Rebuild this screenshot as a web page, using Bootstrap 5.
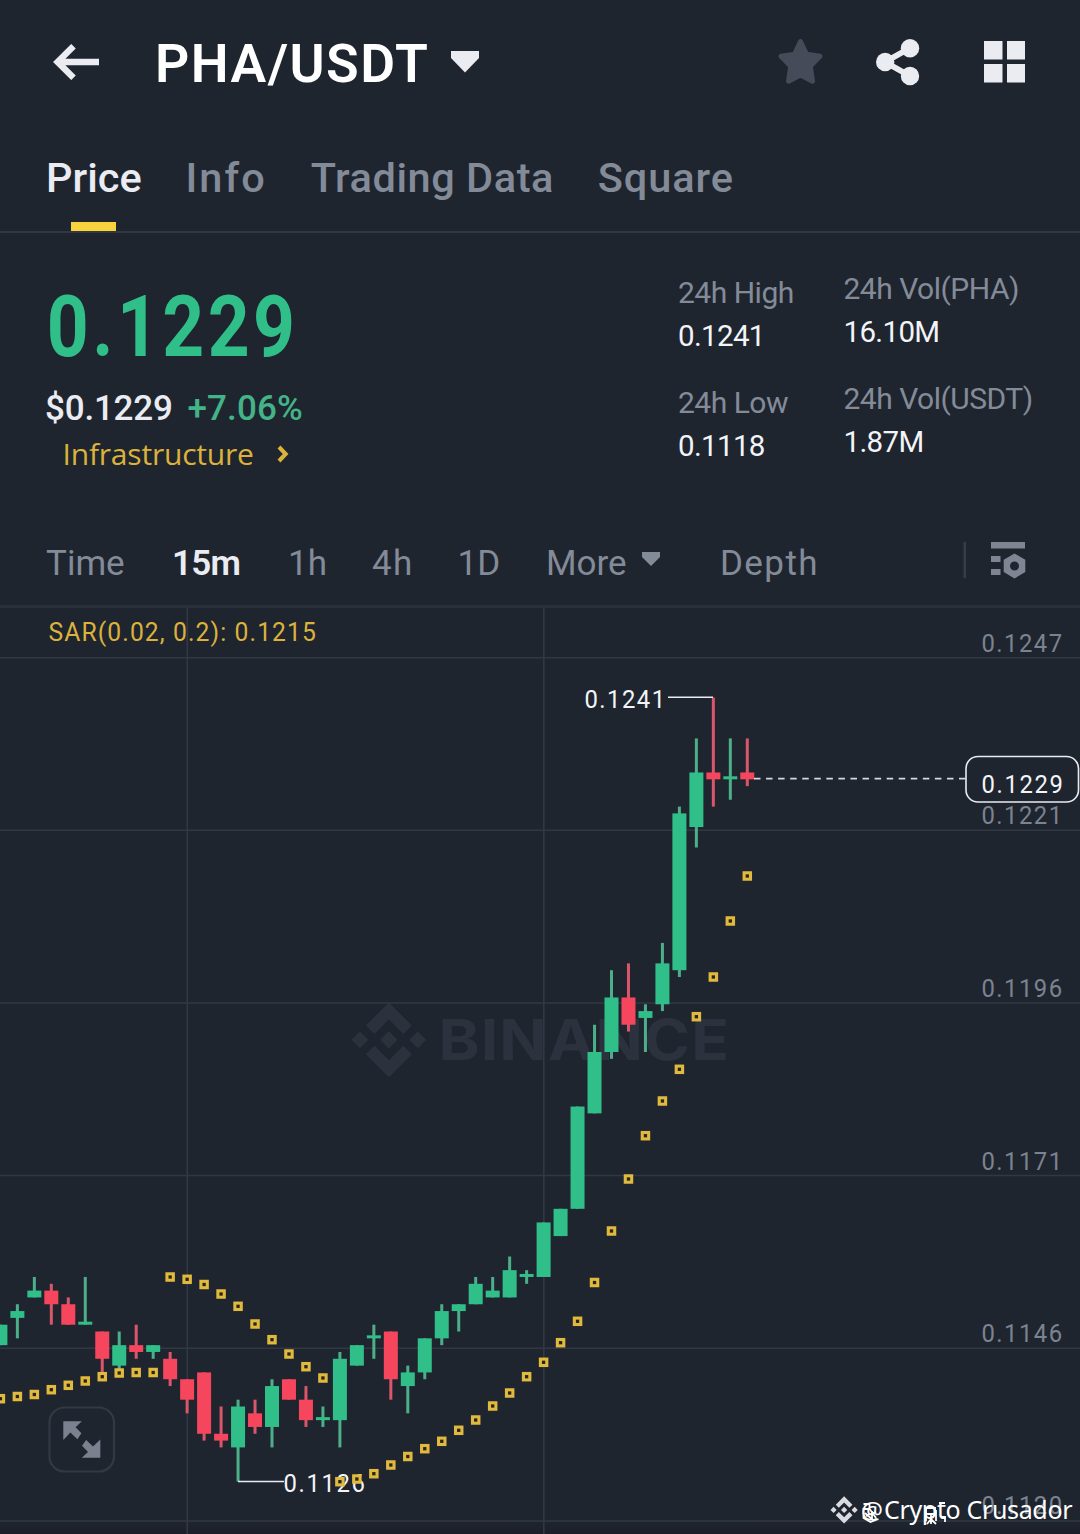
<!DOCTYPE html>
<html lang="en" data-bs-theme="dark">
<head>
<meta charset="utf-8">
<meta name="viewport" content="width=device-width, initial-scale=1">
<title>PHA/USDT</title>
<link href="https://cdn.jsdelivr.net/npm/bootstrap@5.3.0/dist/css/bootstrap.min.css" rel="stylesheet">
<style>
:root{--bg:#1f252f;--line:#323843;--mut:#848b98;--txt:#eaecf2;--up:#30bf89;--upw:#4caf8a;--down:#f6465d;--downw:#d9566b;--gold:#dcb23c}
body{width:1080px;height:1534px;overflow:hidden;background:var(--bg);color:var(--txt);font-family:Roboto,"Noto Sans",sans-serif}
svg{display:block}
.topbar{height:124px;padding-left:53px;padding-right:54px}
.pair{font-size:53.5px;font-weight:600;letter-spacing:1.45px;line-height:60px;color:#fff;margin-left:56px;padding-top:4px}
.pair-caret{margin-left:22px}
.act-share{margin-left:52px}.act-grid{margin-left:63px}
.tabs{height:109px;padding-left:46px;gap:43.8px;border-bottom:2px solid var(--line);font-size:41.5px;font-weight:500;line-height:107px}
.tabs a,.frames a{color:var(--mut);text-decoration:none}
.tabs a.active,.frames a.active{color:var(--txt)}
.tabs a.active::after{content:"";position:absolute;left:25px;bottom:0;width:45px;height:9px;background:#f8d33e}
.t1{letter-spacing:0}.t2{letter-spacing:2.1px}.t3{letter-spacing:.55px}.t4{letter-spacing:.9px}
.ticker{height:287px}
.lastcol{width:678px;padding:44px 0 0 46px}
.last{font-size:85px;font-weight:700;line-height:100px;letter-spacing:4px;color:var(--up);transform:scaleX(.86);transform-origin:0 0;padding-left:1px}
.sub{font-size:35px;font-weight:500;line-height:44px;margin-top:10px;letter-spacing:-.2px;margin-left:-1px}
.chg{color:#42b487;letter-spacing:.13px;margin-left:14.8px}
.sector{font-family:"Open Sans",sans-serif;font-size:30px;line-height:42px;color:var(--gold);letter-spacing:-.2px;margin:2px 0 0 16.5px}
.sector svg{margin-left:23px}
.stat{gap:23px}
.stat-a{width:165.5px;padding-top:38px}.stat-b{padding-top:34px}
.lbl{font-size:30px;line-height:44px;color:var(--mut);letter-spacing:-.5px}
.val{font-size:29.5px;line-height:43px;color:#f2f4f8;letter-spacing:-.65px}
.stat-b .val{line-height:42px;margin-bottom:1px}
.frames{height:88px;border-bottom:3px solid #2a303b;padding-left:46px;grid-template-columns:126px 116px 84px 85.5px 88.5px 174px 242px auto;font-size:35px;line-height:87px}
.frames a.active{font-weight:600;letter-spacing:-.8px}
.frames .wide{letter-spacing:1.4px}
.more-caret{margin:32px 0 0 15.5px}
.frame-set{margin-top:21px}
.axis{font-size:26.5px;fill:#7c8390}
</style>
<script src="https://cdn.jsdelivr.net/npm/bootstrap@5.3.0/dist/js/bootstrap.bundle.min.js"></script>
</head>
<body>
<header class="topbar d-flex align-items-center">
  <svg width="46" height="36" viewBox="0 0 46 36" fill="none" stroke="#eaecf2" stroke-width="6.4"><path d="M20.5 2.2 4.6 18l15.900 15.800M5 18h41"/></svg>
  <div class="pair">PHA/USDT</div>
  <svg class="pair-caret" width="28" height="23" viewBox="0 0 28 23"><path d="M0 0h28v7L14 21.500 0 7z" fill="#eaecf2"/></svg>
  <div class="d-flex align-items-center ms-auto">
    <svg width="46" height="48" viewBox="0.500 0 46 48"><path d="M23 3.500l6 12.700 13.500 2-9.700 10.100 2.200 14.900L23 37 11 43.200l2.200-14.900L3.500 18.200l13.500-2z" fill="#444c5a" stroke="#444c5a" stroke-width="5" stroke-linejoin="round"/></svg>
    <svg class="act-share" width="45" height="47" viewBox="0.500 0 45 47" fill="#eaecf2"><path d="M9.500 23 34.500 9M9.500 23 34.500 37" stroke="#eaecf2" stroke-width="6"/><circle cx="9.700" cy="23" r="9.200"/><circle cx="34.500" cy="9.300" r="9.200"/><circle cx="34.500" cy="37" r="9.200"/></svg>
    <svg class="act-grid" width="42" height="42" viewBox="0 0 42 42" fill="#eaecf2"><path d="M0 0h18.500v18.500H0zM23 0h18v18.500H23zM0 23h18.500v18.500H0zM23 23h18v18.500H23z"/></svg>
  </div>
</header>

<nav class="tabs d-flex">
  <a href="#" class="t1 active position-relative">Price</a>
  <a href="#" class="t2">Info</a>
  <a href="#" class="t3">Trading Data</a>
  <a href="#" class="t4">Square</a>
</nav>

<section class="ticker d-flex">
  <div class="lastcol">
    <div class="last">0.1229</div>
    <div class="sub d-flex"><span>$0.1229</span><span class="chg">+7.06%</span></div>
    <div class="sector d-flex align-items-center">Infrastructure
      <svg width="12" height="18" viewBox="0 0 12 18" fill="none" stroke="#dcb23c" stroke-width="4"><path d="M2 2l6.700 7L2 16"/></svg>
    </div>
  </div>
  <div class="stat stat-a d-flex flex-column">
    <div><div class="lbl">24h High</div><div class="val">0.1241</div></div>
    <div><div class="lbl">24h Low</div><div class="val">0.1118</div></div>
  </div>
  <div class="stat stat-b d-flex flex-column">
    <div><div class="lbl">24h Vol(PHA)</div><div class="val">16.10M</div></div>
    <div><div class="lbl">24h Vol(USDT)</div><div class="val">1.87M</div></div>
  </div>
</section>

<nav class="frames d-grid">
  <a href="#">Time</a>
  <a href="#" class="active">15m</a>
  <a href="#">1h</a>
  <a href="#" class="wide">4h</a>
  <a href="#">1D</a>
  <a href="#" class="d-flex">More<svg class="more-caret" width="18" height="14" viewBox="0 0 18 14"><path d="M0 0h18v5L9 14 0 5z" fill="#848b98"/></svg></a>
  <a href="#" class="wide">Depth</a>
  <svg class="frame-set" width="64" height="38" viewBox="0 0 64 38" fill="#7f8693"><path d="M1.500 1h2.500v36H1.500z" fill="#363d49"/><path d="M29 1h34v6.500H29zM29 15h9.500v6H29zM29 28h9.500v6H29z"/><path fill-rule="evenodd" d="M52.500 12.500l10.800 6.200V31l-10.800 6.500L41.700 31V18.700zM52.500 20.500a4.500 4.500 0 1 0 0 9 4.500 4.500 0 1 0 0-9z"/></svg>
</nav>

<svg id="chart" width="1080" height="926" viewBox="0 608 1080 926">
  <defs>
    <linearGradient id="fade" x1="0" y1="0" x2="0" y2="1"><stop offset="0" stop-color="#1c212c" stop-opacity="0"/><stop offset="1" stop-color="#191e29"/></linearGradient>
    <g id="bnb"><path d="M38.730 53.200 63.310 28.620 87.900 53.220 102.200 38.910 63.310 0 24.420 38.890zM0 63.310 14.300 49 28.600 63.300 14.300 77.610zM38.730 73.410 63.310 98 87.900 73.400 102.210 87.690 63.310 126.610 24.410 87.720zM98 63.310 112.300 49.010 126.610 63.300 112.300 77.610zM77.830 63.300 63.310 48.780 48.780 63.300 63.310 77.820z"/></g>
  </defs>
  <rect y="1521" width="1080" height="13" fill="url(#fade)"/>
  <g fill="#2c323d">
    <use href="#bnb" transform="translate(351.500 1002.500) scale(.59)"/>
    <text transform="translate(438.500 1060) scale(1.100 1)" font-family="Inter" font-weight="700" font-size="56.500" textLength="264">BINANCE</text>
  </g>
  <path stroke="#323843" stroke-width="1.600" d="M187.300 608V1534M543.800 608V1534M0 657.700H1080M0 830.300H1080M0 1003H1080M0 1175.500H1080M0 1348.300H1080M0 1521H1080"/>
  <text transform="translate(48.500 640.700) scale(.95 1)" font-size="26" textLength="281.500" fill="#dcb23c">SAR(0.02, 0.2): 0.1215</text>
  <g class="axis" transform="translate(981.500 0) scale(.9 1)">
    <text y="652" textLength="89.500">0.1247</text><text y="824" textLength="89.500">0.1221</text>
    <text y="997" textLength="89.500">0.1196</text><text y="1170" textLength="89.500">0.1171</text>
    <text y="1342" textLength="89.500">0.1146</text><text y="1514.500" textLength="89.500">0.1120</text>
  </g>
  <g id="candles"></g>
  <path d="M668 697.300H713M238 1481.500H284" stroke="#eaecf2" stroke-width="1.600"/>
  <g font-size="26.500" fill="#f2f4f8">
    <text transform="translate(584.500 708) scale(.9 1)" textLength="89.500">0.1241</text>
    <text transform="translate(283.500 1491.500) scale(.9 1)" textLength="90.500">0.1126</text>
  </g>
  <g id="sar" fill="#2a2415" stroke="#e0b93f" stroke-width="3.100"></g>
  <path d="M754 778.700H966" stroke="#d5d8df" stroke-width="1.800" stroke-dasharray="6.500 5.560"/>
  <rect x="966" y="756.500" width="112.500" height="45.500" rx="12" fill="#1f252f" stroke="#eaecf2" stroke-width="1.600"/>
  <text transform="translate(981.500 793) scale(.9 1)" font-size="26.500" textLength="90.500" fill="#f2f4f8">0.1229</text>
  <rect x="49.500" y="1407.500" width="64.500" height="64" rx="15" fill="#1f252f" stroke="#323945" stroke-width="2.200"/>
  <g fill="#7b828f"><path d="M63.300 1421.300h18.500L75.600 1427.200 81.400 1433.300 77.400 1439.300 70.400 1432.500 63.300 1440z"/><path d="M100.300 1457.800H81.800L88 1451.900 82 1445.800 86.200 1440 93 1446.600 100.300 1439.500z"/></g>
  <use href="#bnb" transform="translate(830.500 1496.300) scale(.215)" fill="#d9dbe0"/>
  <g fill="#fff" font-family="Noto Sans">
    <text x="861" y="1519" font-size="24" textLength="22" lengthAdjust="spacingAndGlyphs">@</text>
    <text x="884" y="1519.300" font-size="25" textLength="188.500">Crypto Crusador</text>
  </g>
  <g fill="none" stroke="#fff" stroke-width="1.800"><path d="M863.500 1504h6v5h-6v9l7 4 8-3M865 1513l9 8M869 1508l7 10M872 1511v9M866 1516l10-4"/><path d="M926 1508v13M926 1508h9v6h-9M931 1514v10M936 1510v11M939 1503h6M927 1524l4-5 5 5M941 1517h4v5"/></g>
</svg>

<script>
// x position of slot k counted from the newest candle, y position of n price ticks below the high
const X = k => 747.3 - 16.975 * k, Y = n => 697.5 + 6.8174 * n;
// [high, body top, body bottom, low, falling?] from the oldest candle to the newest
const candles = [[92,92,95,95],[89,90,91,94],[85,87,88,88],[86,87,89,92,1],[88,89,92,92,1],[85,92,92,92],[93,93,97,99,1],[93,95,98,99],[92,95,96,97,1],[95,95,96,97],[96,97,100,101,1],[100,100,103,105,1],[99,99,108,109,1],[104,108,109,110,1],[103,104,110,115],[103,105,107,108,1],[100,101,107,110],[100,100,103,103,1],[101,103,106,107,1],[104,106,106,107],[96,97,106,110],[95,95,98,98],[92,94,94,97],[93,93,100,103,1],[98,99,101,105],[94,94,99,100],[89,90,94,95],[89,89,90,93],[85,86,89,89],[85,87,88,88],[82,84,88,88],[84,85,85,86],[77,77,85,85],[75,75,79,79],[60,60,75,75],[48,52,61,61],[40,44,52,53],[39,44,48,49,1],[45,46,47,52],[36,39,45,46],[16,17,40,41],[6,11,19,22],[0,11,12,16,1],[6,12,12,15],[6,11,12,13,1]];
const sar = [1398.7,1396.5,1394.5,1389.7,1385.3,1381,1376.7,1373,1372.5,1372.5,1277,1279.3,1284.5,1294,1306.3,1324,1339.7,1354,1366.7,1378,1481.7,1479,1473.7,1465,1456.5,1448.7,1441.3,1430.3,1420,1406,1393,1376.7,1362.3,1342.7,1321.3,1282.5,1231,1179,1135.7,1101,1069.3,1016.7,977,921,876];
const last = candles.length - 1;
document.getElementById('candles').innerHTML = candles.map(([h, t, b, l, down], i) => {
  const x = X(last - i), top = t === b ? Y(b) - 3 : Y(t);
  return `<rect x="${x - 1.5}" y="${Y(h)}" width="3" height="${Y(l) - Y(h)}" fill="var(--${down ? 'downw' : 'upw'})"/>` +
    `<rect x="${x - 7}" y="${top}" width="14" height="${Y(b) - top}" fill="var(--${down ? 'down' : 'up'})"/>`;
}).join('');
document.getElementById('sar').innerHTML = sar.map((y, i) =>
  `<rect x="${X(last - i) - 3.2}" y="${y - 3.2}" width="6.4" height="6.4"/>`).join('');
</script>
</body>
</html>
